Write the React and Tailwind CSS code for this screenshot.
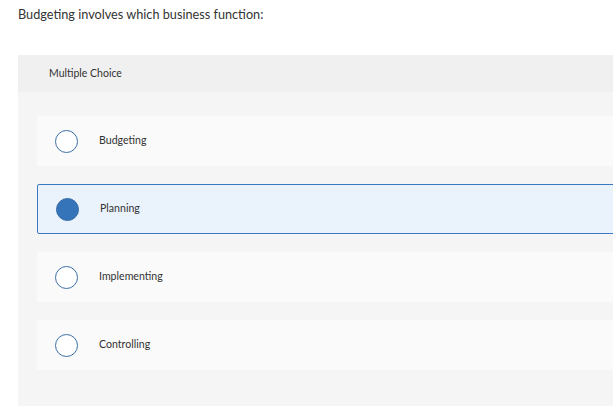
import React from "react";

const options = ["Budgeting", "Planning", "Implementing", "Controlling"];

export default function App() {
  return (
    <div className="w-[613px] h-[406px] overflow-hidden bg-white text-[#333]" style={{ fontFamily: '"Lato", "Liberation Sans", sans-serif' }}>
      <div className="pl-[18px] pt-[6px] h-[55px] text-[12.7px] leading-[16px] text-[#333]">
        Budgeting involves which business function:
      </div>
      <div className="ml-[18px] w-[620px] bg-[#f5f5f5] h-[351px]">
        <div className="h-[37px] bg-[#f0f0f0] flex items-center pl-[31px] text-[10.5px] text-[#333]">
          Multiple Choice
        </div>
        <div className="flex flex-col gap-[18px] pt-[24px] pl-[19px]">
          {options.map((o, i) => {
            const sel = i === 1;
            return (
              <div
                key={o}
                className={
                  "h-[50px] flex items-center pl-[18px] " +
                  (sel
                    ? "bg-[#eaf2fc] border border-[#3b78c3] rounded-[2px]"
                    : "bg-[#fafafa]")
                }
              >
                <div
                  className={
                    "w-[23px] h-[23px] rounded-full border-[1.5px] border-[#3a6fa8] " +
                    (sel ? "bg-[#3574b9]" : "bg-white")
                  }
                />
                <span className="ml-[21px] text-[10.6px] text-[#333]">{o}</span>
              </div>
            );
          })}
        </div>
      </div>
    </div>
  );
}
